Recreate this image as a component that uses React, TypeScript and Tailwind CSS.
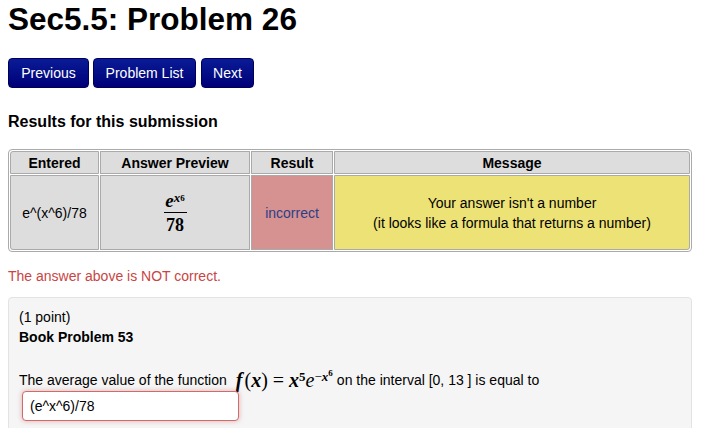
export default function App() {
  return (
    <div className="min-h-screen bg-white px-2 font-['Liberation_Sans',Arial,sans-serif] text-[14px] leading-5 text-black">
      <h1 className="pt-px text-[31.5px] font-bold leading-[36px]">Sec5.5: Problem 26</h1>

      <div className="mt-[21px] flex">
        <NavButton label="Previous" className="w-[81px]" />
        <NavButton label="Problem List" className="ml-1 w-[103px]" />
        <NavButton label="Next" className="ml-[5px] w-[53px]" />
      </div>

      <h2 className="mt-6 text-[16px] font-bold leading-5">Results for this submission</h2>

      <table className="mt-[17px] w-[684px] table-fixed border-separate border-spacing-px rounded-[4px] border border-[#aaa]">
        <thead>
          <tr className="h-[23px]">
            <th className="w-[89px] rounded-tl-[3px] border border-[#aaa] bg-[#dddddd] p-0 font-bold">Entered</th>
            <th className="w-[150px] border border-[#aaa] bg-[#dddddd] p-0 font-bold">Answer Preview</th>
            <th className="w-[82px] border border-[#aaa] bg-[#dddddd] p-0 font-bold">Result</th>
            <th className="rounded-tr-[3px] border border-[#aaa] bg-[#dddddd] p-0 font-bold">Message</th>
          </tr>
        </thead>
        <tbody>
          <tr className="h-[75px]">
            <td className="rounded-bl-[3px] border border-[#aaa] bg-[#dddddd] text-center">e^(x^6)/78</td>
            <td className="border border-[#aaa] bg-[#dddddd] text-center">
              <Preview />
            </td>
            <td className="border border-[#aaa] bg-[#d69191] text-center text-[#2c3f86]">incorrect</td>
            <td className="rounded-br-[3px] border border-[#aaa] bg-[#ede275] text-center">
              Your answer isn't a number
              <br />
              (it looks like a formula that returns a number)
            </td>
          </tr>
        </tbody>
      </table>

      <p className="mt-[14px] text-[#c94444]">The answer above is NOT correct.</p>

      <div className="mt-[11px] w-[684px] rounded-[4px] border border-[#e3e3e3] bg-[#f5f5f5] px-[10px] pt-[9px] pb-6">
        <div>(1 point)</div>
        <div className="font-bold">Book Problem 53</div>
        <div className="mt-[23px] flex h-5 items-center">
          <span>The average value of the function</span>
          <Formula />
          <span className="pl-[4px]">on the interval [0, 13 ] is equal to</span>
        </div>
        <input
          readOnly
          value="(e^x^6)/78"
          className="ml-[3px] mt-px h-[30px] w-[217px] rounded-[4px] border border-[#cf6b6d] bg-white px-[7px] text-[14px] text-black shadow-[0_0_5px_rgba(200,80,80,0.45)] outline-none"
        />
      </div>
    </div>
  );
}

function NavButton({ label, className }: { label: string; className: string }) {
  return (
    <button
      className={`h-[30px] rounded-[4px] border border-[#00005a] bg-gradient-to-b from-[#0b1a96] to-[#000078] px-0 text-[14px] leading-5 text-white ${className}`}
    >
      {label}
    </button>
  );
}

function Preview() {
  return (
    <span className="inline-flex flex-col items-center font-['Liberation_Serif',serif] font-bold">
      <span className="pb-[2px] text-[19px] leading-[18px]">
        <i>e</i>
        <sup className="relative -top-[5px] text-[13px] leading-none">
          <i>x</i>
          <sup className="relative -top-[1px] text-[9px]">6</sup>
        </sup>
      </span>
      <span className="h-px w-[23px] bg-black" />
      <span className="pt-[3px] text-[18px] leading-[18px]">78</span>
    </span>
  );
}

function Formula() {
  return (
    <span className="pl-[9px] font-['Liberation_Serif',serif] text-[20px] leading-5">
      <i className="font-bold">f</i>
      <span className="pl-[2px]">(</span>
      <i className="font-bold">x</i>
      <span>)</span>
      <span className="px-[5px]">=</span>
      <i className="font-bold">x</i>
      <sup className="text-[13px] font-bold">5</sup>
      <i>e</i>
      <sup className="text-[13px]">
        −<i className="font-bold">x</i>
        <sup className="text-[9px] font-bold">6</sup>
      </sup>
    </span>
  );
}
